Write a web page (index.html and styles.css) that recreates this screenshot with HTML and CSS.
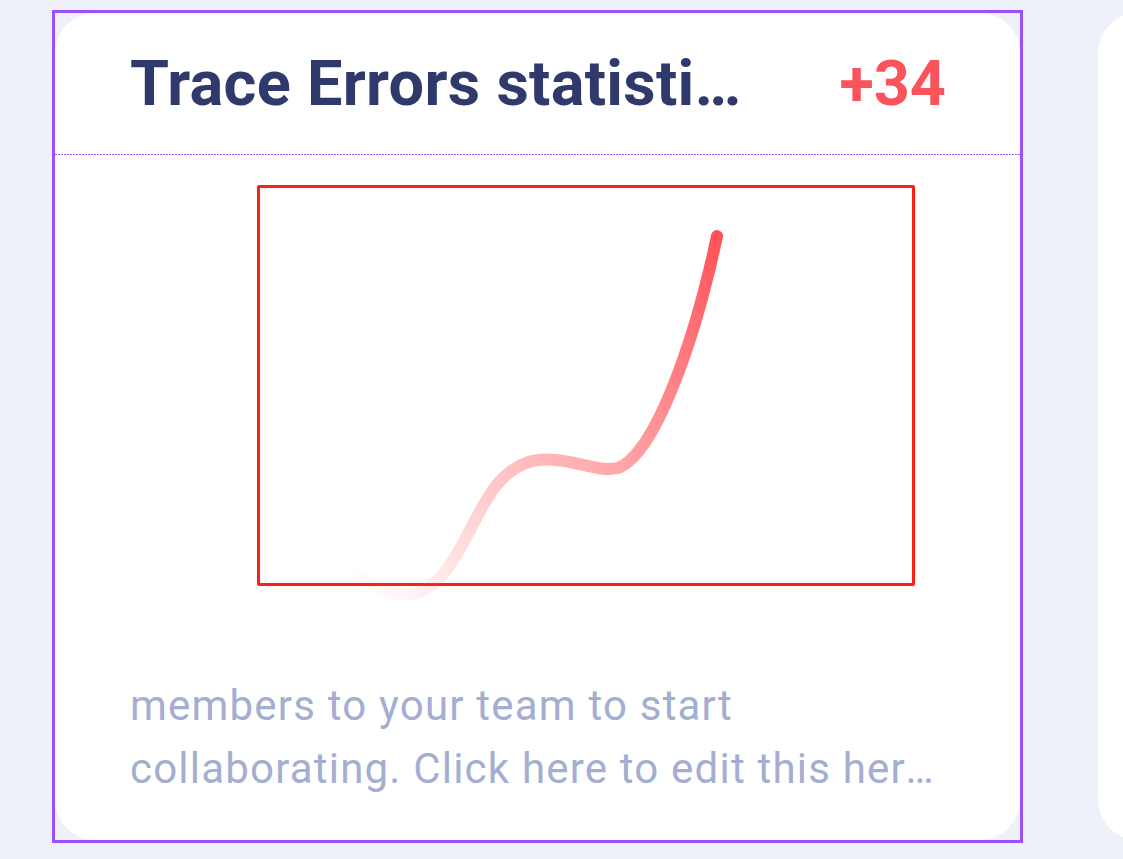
FILE: index.html
```html
<!DOCTYPE html>
<html>
  <head>
    <title>Trace Errors statistics</title>
    <link rel="stylesheet" href="styles.css">
  </head>
  <body>
    <div class="row">
      <div class="selected">
        <div class="card">
          <div class="card-head">
            <div class="card-title">Trace Errors statistics</div>
            <div class="card-value">+34</div>
          </div>
          <div class="chart">
            <svg class="chart-line" width="652" height="395" viewBox="1 1 652 395">
              <defs>
                <linearGradient id="lineFade" gradientUnits="userSpaceOnUse" x1="98" y1="403" x2="458" y2="49">
                  <stop offset="0" stop-color="#ff5258" stop-opacity="0"/>
                  <stop offset="0.45" stop-color="#ff5258" stop-opacity="0.42"/>
                  <stop offset="1" stop-color="#ff5258" stop-opacity="1"/>
                </linearGradient>
              </defs>
              <path d="M98 389 C126 403,141 413,161 405 C196 391,211 333,236 300 C256 275,276 271,296 273 C321 275,341 285,359 281 C396 268,436 153,458 49"
                fill="none" stroke="url(#lineFade)" stroke-width="12" stroke-linecap="round"/>
            </svg>
          </div>
          <p class="card-text">members to your team to start collaborating. Click here to edit this here and there again.</p>
        </div>
      </div>
      <div class="card card-next"></div>
    </div>
  </body>
</html>
```

FILE: styles.css
```css
body {
  margin: 0;
  background-color: #eef1fa;
  font-family: Roboto, "Liberation Sans", sans-serif;
  overflow: hidden;
}

.row {
  display: flex;
  align-items: flex-start;
  gap: 75px;
  padding: 10px 0 0 52px;
}

.selected {
  flex: none;
  border: 3px solid #9b50ff;
}

.card {
  display: flex;
  flex-direction: column;
  width: 965px;
  height: 827px;
  background-color: #fff;
  border-radius: 40px;
  overflow: hidden;
}

.card-next {
  flex: none;
  margin-top: 3px;
}

.card-head {
  display: flex;
  align-items: center;
  gap: 96px;
  height: 141px;
  padding: 0 74px 1px 75px;
  background: repeating-linear-gradient(to right, #9b50ff 0 2px, transparent 2px 3px) left bottom / 100% 1px no-repeat;
}

.card-title {
  flex: 1;
  min-width: 0;
  font-size: 63px;
  font-weight: 700;
  letter-spacing: 0.3px;
  color: #2f396b;
  white-space: nowrap;
  overflow: hidden;
  text-overflow: ellipsis;
}

.card-value {
  font-size: 63px;
  font-weight: 700;
  color: #fa535c;
}

.chart {
  width: 652px;
  height: 395px;
  margin: 30px 0 0 202px;
  border: 3px solid #ff1d16;
  border-radius: 2px;
}

.chart-line {
  display: block;
  overflow: visible;
}

.card-text {
  margin: 88px 75px 0 75px;
  font-size: 42px;
  line-height: 63px;
  letter-spacing: 1.2px;
  color: #a3aed1;
  display: -webkit-box;
  -webkit-line-clamp: 2;
  -webkit-box-orient: vertical;
  overflow: hidden;
}
```
